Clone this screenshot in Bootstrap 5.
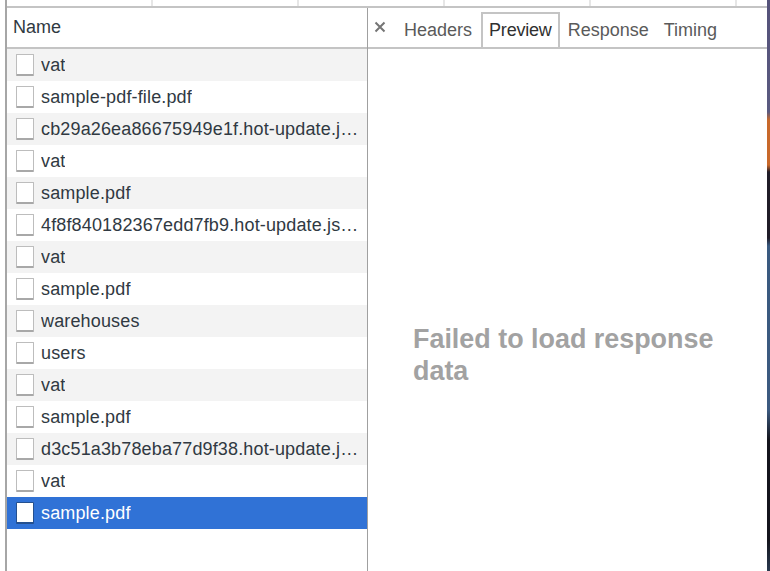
<!DOCTYPE html>
<html lang="en">
<head>
<meta charset="utf-8">
<title>Network</title>
<link href="https://cdn.jsdelivr.net/npm/bootstrap@5.3.0/dist/css/bootstrap.min.css" rel="stylesheet">
<style>
html,body{height:571px;overflow:hidden;background:#fff;}
body{font-family:"Liberation Sans",Arial,sans-serif;font-size:18px;color:#303942;}
.shell{height:571px;padding-left:5px;}
.panel{border-left:2px solid #a6a6a6;min-width:0;}
.desk{width:3px;background:linear-gradient(to bottom,#55527a 0,#5a5a80 112px,#c8682a 120px,#c8682a 165px,#201c28 172px,#201c28 238px,#3a5a80 246px,#3c5a80 410px,#14141c 440px,#14141c 540px,#2a3a50 571px);}
.ticks{height:8px;border-bottom:2px solid #c4c4c4;}
.tick{width:146px;border-right:2px solid #e6e6e6;}
.left-pane{width:361px;border-right:1px solid #a0a0a0;}
.name-head{height:41px;border-bottom:2px solid #c4c4c4;padding-left:6px;line-height:38px;color:#303942;}
.row-item{height:32px;padding:0 7px 0 9px;gap:7px;border:0;border-radius:0;color:#303942;background:#fff;font-size:18px;}
.row-item.alt{background:#f3f3f3;}
.row-item.sel{background:#3072d6;color:#fff;}
.row-item.sel .doc{border-color:#24508f;background:#fff;}
.doc{width:18px;height:22px;border:1px solid #bdbdbd;border-bottom:2px solid #a8a8a8;background:#fff;flex:none;border-radius:1px;}
.row-label{line-height:32px;letter-spacing:.15px;min-width:0;}
.right-pane{min-width:0;}
.tab-strip{height:41px;border-bottom:2px solid #c4c4c4;padding-left:6px;color:#5a5a5a;}
.closer{width:12px;height:12px;margin-right:11px;margin-bottom:14px;flex:none;align-self:flex-end;}
.tab-lbl{padding:0 5px;height:35px;line-height:33px;border:2px solid transparent;border-bottom:0;margin-right:1px;}
.tab-lbl:first-of-type{margin-right:2px;}
.tab-lbl.on{border-color:#c4c4c4;color:#303030;margin-right:1px;padding:0 6px;letter-spacing:-.2px;}
.msg-wrap{padding:274px 45px 0;}
.msg{font-size:26.9px;line-height:32px;font-weight:700;color:#a2a2a2;}
</style>
</head>
<body>
<div class="shell d-flex">
  <div class="panel flex-grow-1 d-flex flex-column">
    <div class="ticks d-flex flex-shrink-0">
      <div class="tick"></div><div class="tick"></div><div class="tick"></div><div class="tick"></div><div class="tick"></div>
    </div>
    <div class="d-flex flex-grow-1">
      <div class="left-pane flex-shrink-0">
        <div class="name-head">Name</div>
        <div class="list-group list-group-flush">
          <div class="list-group-item row-item alt d-flex align-items-center"><span class="doc"></span><span class="row-label text-truncate">vat</span></div>
          <div class="list-group-item row-item d-flex align-items-center"><span class="doc"></span><span class="row-label text-truncate">sample-pdf-file.pdf</span></div>
          <div class="list-group-item row-item alt d-flex align-items-center"><span class="doc"></span><span class="row-label text-truncate">cb29a26ea86675949e1f.hot-update.json</span></div>
          <div class="list-group-item row-item d-flex align-items-center"><span class="doc"></span><span class="row-label text-truncate">vat</span></div>
          <div class="list-group-item row-item alt d-flex align-items-center"><span class="doc"></span><span class="row-label text-truncate">sample.pdf</span></div>
          <div class="list-group-item row-item d-flex align-items-center"><span class="doc"></span><span class="row-label text-truncate">4f8f840182367edd7fb9.hot-update.json</span></div>
          <div class="list-group-item row-item alt d-flex align-items-center"><span class="doc"></span><span class="row-label text-truncate">vat</span></div>
          <div class="list-group-item row-item d-flex align-items-center"><span class="doc"></span><span class="row-label text-truncate">sample.pdf</span></div>
          <div class="list-group-item row-item alt d-flex align-items-center"><span class="doc"></span><span class="row-label text-truncate">warehouses</span></div>
          <div class="list-group-item row-item d-flex align-items-center"><span class="doc"></span><span class="row-label text-truncate">users</span></div>
          <div class="list-group-item row-item alt d-flex align-items-center"><span class="doc"></span><span class="row-label text-truncate">vat</span></div>
          <div class="list-group-item row-item d-flex align-items-center"><span class="doc"></span><span class="row-label text-truncate">sample.pdf</span></div>
          <div class="list-group-item row-item alt d-flex align-items-center"><span class="doc"></span><span class="row-label text-truncate">d3c51a3b78eba77d9f38.hot-update.json</span></div>
          <div class="list-group-item row-item d-flex align-items-center"><span class="doc"></span><span class="row-label text-truncate">vat</span></div>
          <div class="list-group-item row-item sel d-flex align-items-center"><span class="doc"></span><span class="row-label text-truncate">sample.pdf</span></div>
        </div>
      </div>
      <div class="right-pane flex-grow-1 d-flex flex-column">
        <div class="tab-strip d-flex align-items-end flex-shrink-0">
          <svg class="closer" viewBox="0 0 12 12"><path d="M1.500 1.500l9 9M10.500 1.500l-9 9" stroke="#757575" stroke-width="2" fill="none"/></svg>
          <span class="tab-lbl">Headers</span><span class="tab-lbl on">Preview</span><span class="tab-lbl">Response</span><span class="tab-lbl">Timing</span>
        </div>
        <div class="msg-wrap flex-grow-1">
          <div class="msg">Failed to load response data</div>
        </div>
      </div>
    </div>
  </div>
  <div class="desk flex-shrink-0"></div>
</div>
</body>
</html>
